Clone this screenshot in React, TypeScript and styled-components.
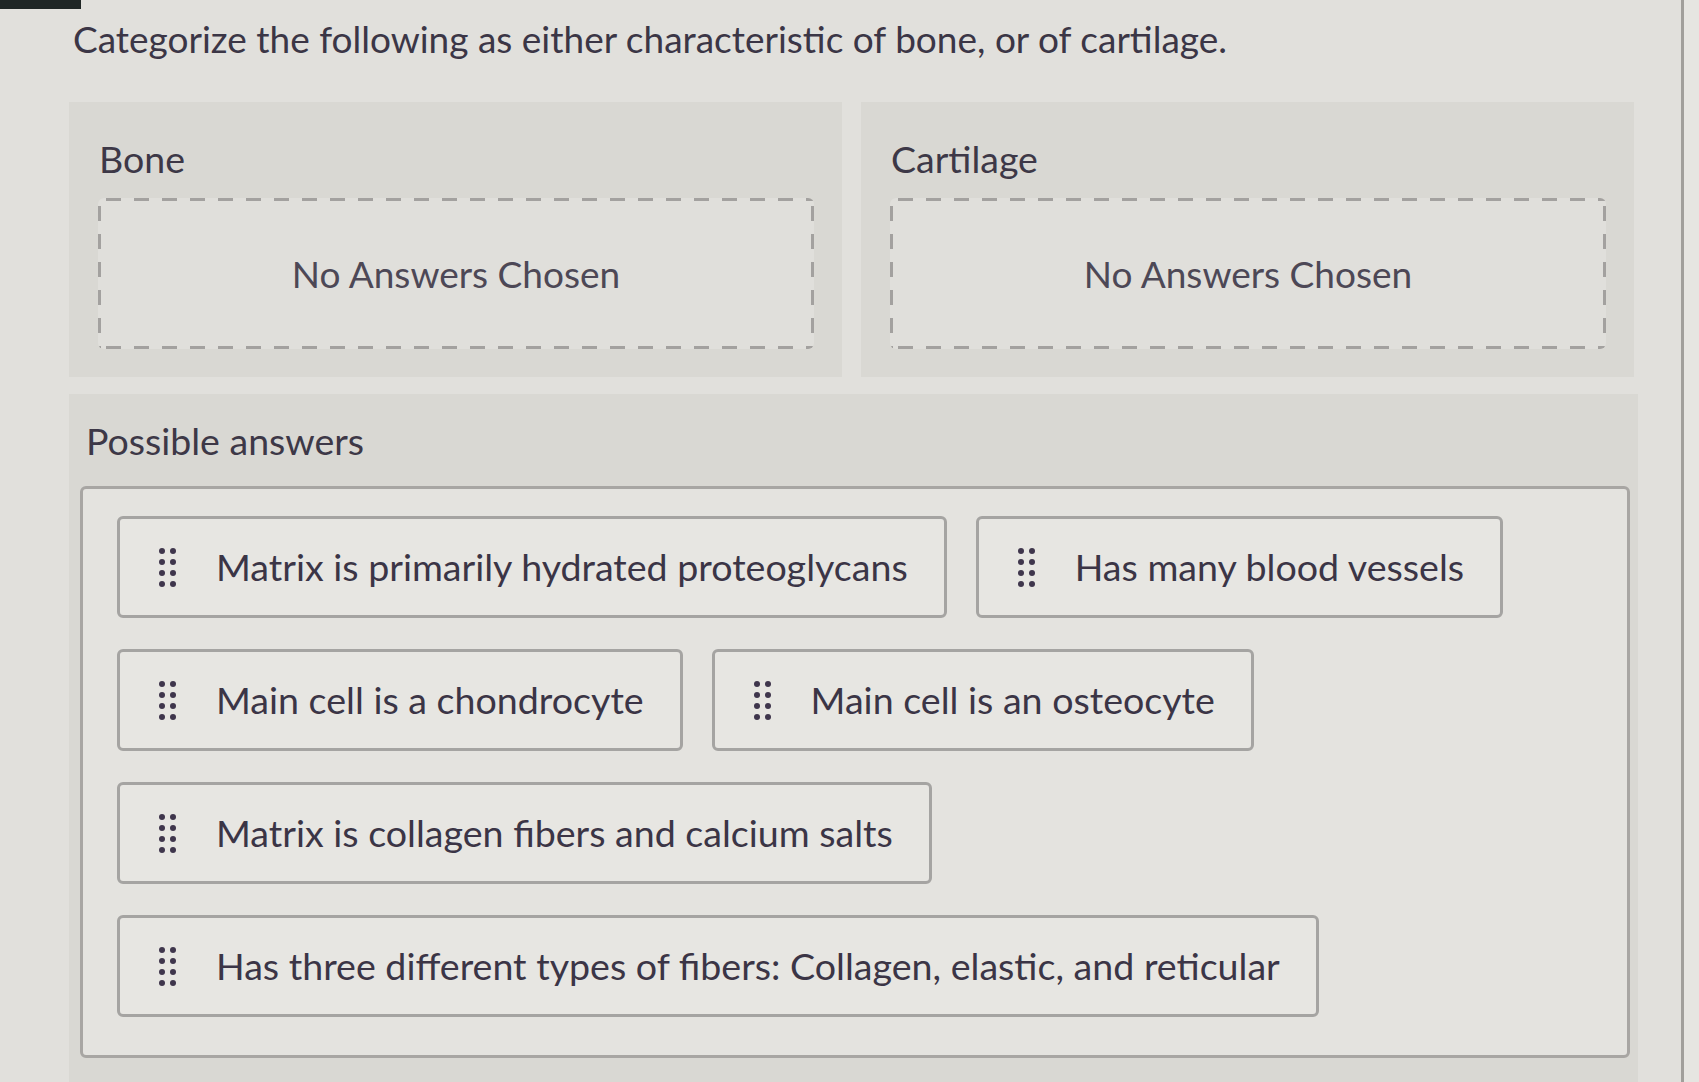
import React from "react";
import styled, { createGlobalStyle } from "styled-components";

const GlobalStyle = createGlobalStyle`
  html, body {
    margin: 0;
    padding: 0;
    background: #e1e0dc;
  }
  body {
    font-family: Lato, "Open Sans", "Liberation Sans", sans-serif;
    color: #3d3847;
  }
  * { box-sizing: border-box; }
`;

const Screen = styled.div`
  width: 1699px;
  height: 1082px;
  overflow: hidden;
  display: flex;
  background: #e1e0dc;
`;

const Main = styled.div`
  width: 1681px;
  flex: none;
  display: flex;
  flex-direction: column;
`;

const EdgeLine = styled.div`
  width: 3px;
  flex: none;
  background: #a19f9b;
`;

const EdgeStrip = styled.div`
  flex: 1;
  background: #e6e5e1;
`;

const TopNub = styled.div`
  width: 81px;
  height: 9px;
  background: #1f2625;
  flex: none;
`;

const Title = styled.h1`
  margin: 8px 0 0 73px;
  font-size: 37px;
  font-weight: 400;
  line-height: 44px;
  color: #3b3646;
`;

const TargetsRow = styled.div`
  margin: 41px 0 0 69px;
  width: 1565px;
  display: grid;
  grid-template-columns: 1fr 1fr;
  gap: 19px;
`;

const TargetPanel = styled.section`
  height: 275px;
  background: #d9d8d3;
  padding: 35px 28px 28px 29px;
  display: flex;
  flex-direction: column;
`;

const TargetLabel = styled.div`
  font-size: 37.5px;
  line-height: 44px;
  color: #3d3847;
  padding-left: 1px;
`;

const dash = "#a3a19f";

const DropZone = styled.div`
  margin-top: 17px;
  flex: 1;
  border-radius: 6px;
  display: flex;
  align-items: center;
  justify-content: center;
  font-size: 37px;
  color: #4d4856;
  background:
    linear-gradient(90deg, ${dash} 54%, transparent 54%) 8px 0 / 28px 3px repeat-x,
    linear-gradient(90deg, ${dash} 54%, transparent 54%) 8px 100% / 28px 3px repeat-x,
    linear-gradient(180deg, ${dash} 54%, transparent 54%) 0 8px / 3px 28px repeat-y,
    linear-gradient(180deg, ${dash} 54%, transparent 54%) 100% 8px / 3px 28px repeat-y,
    #e0dfdb;
`;

const AnswersPanel = styled.section`
  margin: 17px 0 0 69px;
  width: 1569px;
  flex: 1;
  background: #d9d8d3;
  padding: 25px 8px 24px 11px;
  display: flex;
  flex-direction: column;
`;

const AnswersLabel = styled.div`
  font-size: 37.5px;
  line-height: 44px;
  color: #3d3847;
  padding-left: 6px;
`;

const AnswersBox = styled.div`
  margin-top: 23px;
  flex: 1;
  border: 3px solid #a8a6a3;
  border-radius: 6px;
  background: #e4e3df;
  padding: 27px 36px 27px 34px;
  display: flex;
  flex-direction: column;
  align-items: flex-start;
  gap: 31px;
`;

const ChipRow = styled.div`
  display: flex;
  gap: 29px;
`;

const Chip = styled.div`
  height: 102px;
  border: 3px solid #a5a4a2;
  border-radius: 6px;
  background: #e7e6e2;
  display: flex;
  align-items: center;
  padding: 0 36px 0 39px;
  gap: 40px;
`;

const Handle = styled.div`
  display: grid;
  grid-template-columns: repeat(2, 6px);
  grid-auto-rows: 6px;
  column-gap: 5px;
  row-gap: 5px;
  flex: none;
`;

const Dot = styled.span`
  width: 6px;
  height: 6px;
  border-radius: 50%;
  background: #3f364c;
`;

const ChipText = styled.span`
  font-size: 37.6px;
  line-height: 44px;
  color: #3b3546;
  white-space: nowrap;
`;

const rows: string[][] = [
  ["Matrix is primarily hydrated proteoglycans", "Has many blood vessels"],
  ["Main cell is a chondrocyte", "Main cell is an osteocyte"],
  ["Matrix is collagen fibers and calcium salts"],
  ["Has three different types of fibers: Collagen, elastic, and reticular"],
];

const DragHandle = () => (
  <Handle aria-hidden>
    {Array.from({ length: 8 }).map((_, i) => (
      <Dot key={i} />
    ))}
  </Handle>
);

export default function App() {
  return (
    <>
      <GlobalStyle />
      <Screen>
        <Main>
          <TopNub />
          <Title>Categorize the following as either characteristic of bone, or of cartilage.</Title>
          <TargetsRow>
            <TargetPanel>
              <TargetLabel>Bone</TargetLabel>
              <DropZone>No Answers Chosen</DropZone>
            </TargetPanel>
            <TargetPanel>
              <TargetLabel>Cartilage</TargetLabel>
              <DropZone>No Answers Chosen</DropZone>
            </TargetPanel>
          </TargetsRow>
          <AnswersPanel>
            <AnswersLabel>Possible answers</AnswersLabel>
            <AnswersBox>
              {rows.map((row, ri) => (
                <ChipRow key={ri}>
                  {row.map((t) => (
                    <Chip key={t}>
                      <DragHandle />
                      <ChipText>{t}</ChipText>
                    </Chip>
                  ))}
                </ChipRow>
              ))}
            </AnswersBox>
          </AnswersPanel>
        </Main>
        <EdgeLine />
        <EdgeStrip />
      </Screen>
    </>
  );
}
